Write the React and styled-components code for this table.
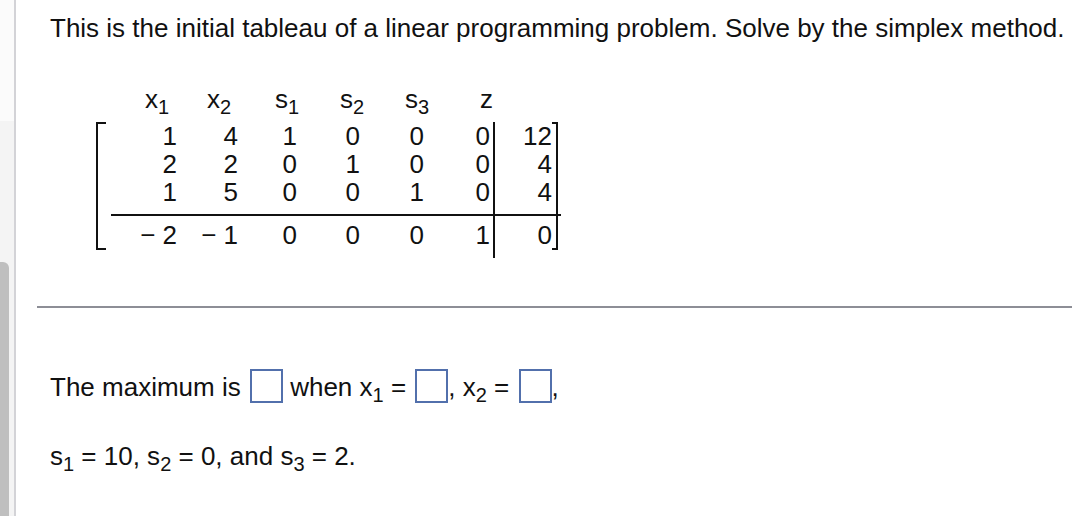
import styled, { createGlobalStyle } from "styled-components";

const GlobalStyle = createGlobalStyle`
    html, body {
        margin: 0;
        padding: 0;
        background: #ffffff;
    }
    body {
        font-family: "Liberation Sans", Arial, sans-serif;
        color: #111111;
    }
`;

const headers = [
    { name: "x", sub: "1", shift: 11 },
    { name: "x", sub: "2", shift: 10 },
    { name: "s", sub: "1", shift: 1 },
    { name: "s", sub: "2", shift: -1 },
    { name: "s", sub: "3", shift: -2 },
    { name: "z", sub: null, shift: 0 },
];

const rows = [
    [["1", "4", "1", "0", "0", "0"], "12"],
    [["2", "2", "0", "1", "0", "0"], "4"],
    [["1", "5", "0", "0", "1", "0"], "4"],
];

const objective = [["\u2212 2", "\u2212 1", "0", "0", "0", "1"], "0"];

export default function App() {
    return (
        <>
            <GlobalStyle />
            <Page>
                <Rail>
                    <RailCap />
                    <RailTrack>
                        <Thumb />
                    </RailTrack>
                </Rail>
                <Main>
                    <Prompt>
                        This is the initial tableau of a linear programming
                        problem. Solve by the simplex method.
                    </Prompt>

                    <Tableau>
                        {headers.map((h, i) => (
                            <Head key={i} $col={i + 2} $shift={h.shift}>
                                {h.name}
                                {h.sub && <Sub>{h.sub}</Sub>}
                            </Head>
                        ))}

                        <Bracket $side="left" />
                        {rows.map(([cells, rhs], r) => [
                            ...cells.map((c, i) => (
                                <Cell key={`${r}-${i}`} $row={r + 2} $col={i + 2}>
                                    {c}
                                </Cell>
                            )),
                            <Cell key={`${r}-rhs`} $row={r + 2} $col={9}>
                                {rhs}
                            </Cell>,
                        ])}
                        <Rule />
                        {objective[0].map((c, i) => (
                            <Cell key={`o-${i}`} $row={6} $col={i + 2} $top>
                                {c}
                            </Cell>
                        ))}
                        <Cell $row={6} $col={9} $top>
                            {objective[1]}
                        </Cell>
                        <Bar />
                        <Bracket $side="right" />
                    </Tableau>

                    <Divider />

                    <Answer>
                        <Line>
                            The maximum is <Blank /> when x<Sub>1</Sub> ={" "}
                            <Blank />, x<Sub>2</Sub> = <Blank />,
                        </Line>
                        <Line $gap={39}>
                            s<Sub>1</Sub> = 10, s<Sub>2</Sub> = 0, and s
                            <Sub>3</Sub> = 2.
                        </Line>
                    </Answer>
                </Main>
            </Page>
        </>
    );
}

const Page = styled.div`
    display: flex;
    width: 1072px;
    height: 516px;
    overflow: hidden;
`;

const Rail = styled.div`
    flex: 0 0 14px;
    display: flex;
    flex-direction: column;
    border-right: 2px solid #d3d3d7;
`;

const RailCap = styled.div`
    height: 121px;
    background: #fbfbfb;
`;

const RailTrack = styled.div`
    flex: 1;
    background: #f4f4f4;
    padding-top: 141px;
    display: flex;
`;

const Thumb = styled.div`
    width: 9px;
    flex: 1 0 auto;
    max-width: 9px;
    background: #bfbfbf;
    border-top-right-radius: 6px;
`;

const Main = styled.div`
    flex: 1;
    padding-left: 21px;
    display: flex;
    flex-direction: column;
`;

const Prompt = styled.div`
    margin: 14px 0 0 13px;
    font-size: 26px;
    line-height: 28px;
    white-space: nowrap;
    color: #111111;
`;

const Tableau = styled.div`
    display: grid;
    grid-template-columns: 12px 72px 61px 59px 63px 64px 66px 2px 60px 6px;
    grid-template-rows: 36px 28px 28px 28px 10px 42px;
    margin: 44px 0 0 59px;
    font-size: 26px;
    line-height: 28px;
    width: max-content;
`;

const Head = styled.div`
    grid-row: 1;
    grid-column: ${(p) => p.$col};
    justify-self: end;
    align-self: end;
    margin-right: ${(p) => p.$shift}px;
    padding-bottom: 9px;
`;

const Sub = styled.sub`
    font-size: 20px;
    line-height: 0;
    vertical-align: -6px;
`;

const Cell = styled.div`
    grid-row: ${(p) => p.$row};
    grid-column: ${(p) => p.$col};
    text-align: right;
    align-self: ${(p) => (p.$top ? "start" : "center")};
    padding-top: ${(p) => (p.$top ? 5 : 0)}px;
    padding-right: 3px;
    white-space: nowrap;
`;

const Bracket = styled.div`
    grid-row: 2 / 7;
    grid-column: ${(p) => (p.$side === "left" ? 1 : 10)};
    border: 2px solid #111111;
    ${(p) =>
        p.$side === "left" ? "border-right: none;" : "border-left: none;"}
    ${(p) =>
        p.$side === "left" ? "width: 10px;" : "width: 6px; margin-left: -3px;"}
    margin-bottom: 8px;
    box-sizing: border-box;
`;

const Rule = styled.div`
    grid-row: 5;
    grid-column: 2 / 11;
    align-self: end;
    height: 2px;
    margin-left: 3px;
    background: #111111;
`;

const Bar = styled.div`
    grid-row: 2 / 7;
    grid-column: 8;
    background: #111111;
`;

const Divider = styled.div`
    margin-top: 48px;
    height: 2px;
    background: #8d8e96;
`;

const Answer = styled.div`
    padding-left: 13px;
    padding-top: 61px;
    font-size: 26px;
`;

const Line = styled.div`
    line-height: 28px;
    margin-top: ${(p) => p.$gap || 0}px;
    white-space: nowrap;
`;

const Blank = styled.span`
    display: inline-block;
    width: 33px;
    height: 34px;
    box-sizing: border-box;
    border: 2px solid #5270ac;
    vertical-align: -7px;
    margin-left: 2px;
`;
